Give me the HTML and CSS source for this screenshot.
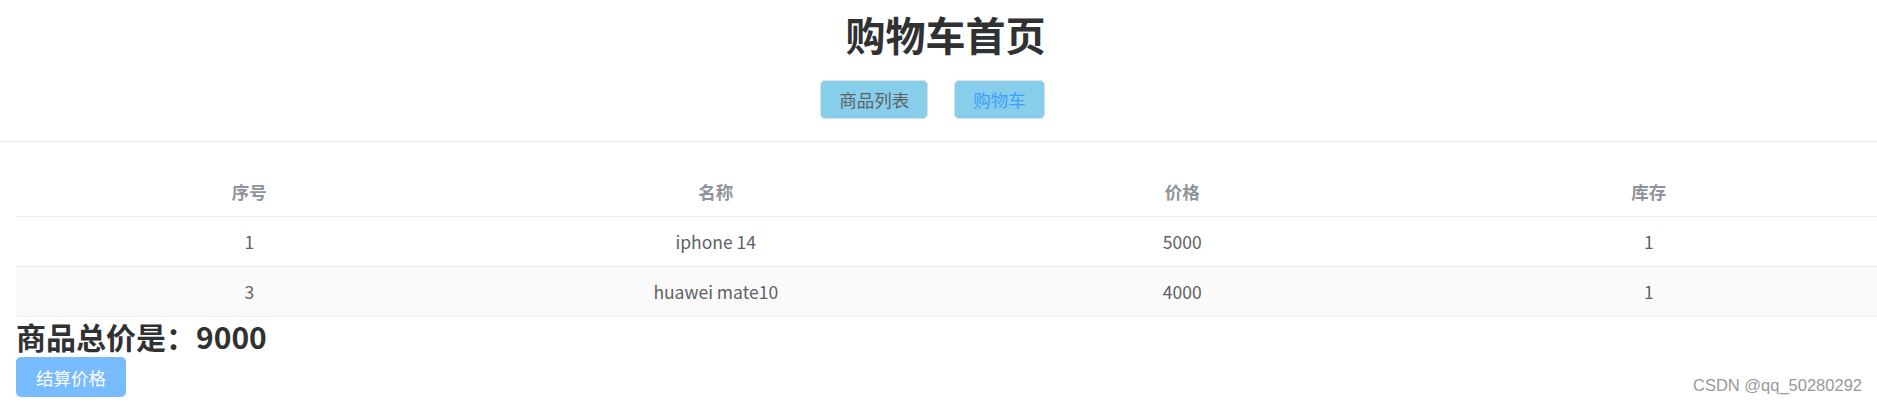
FILE: index.html
```html
<!DOCTYPE html>
<html lang="zh-CN">
<head>
<meta charset="utf-8">
<title>购物车首页</title>
<link rel="stylesheet" href="styles.css">
</head>
<body>
<header class="top">
  <h1 class="title">购物车首页</h1>
  <nav class="nav">
    <button class="nav-btn">商品列表</button>
    <button class="nav-btn active">购物车</button>
  </nav>
</header>
<main class="content">
  <table class="cart">
    <thead>
      <tr><th>序号</th><th>名称</th><th>价格</th><th>库存</th></tr>
    </thead>
    <tbody>
      <tr><td>1</td><td>iphone 14</td><td>5000</td><td>1</td></tr>
      <tr class="striped"><td>3</td><td>huawei mate10</td><td>4000</td><td>1</td></tr>
    </tbody>
  </table>
  <h2 class="total">商品总价是：9000</h2>
  <button class="pay">结算价格</button>
</main>
<div class="watermark">CSDN @qq_50280292</div>
</body>
</html>
```
FILE: styles.css
```css
html, body {
  margin: 0;
  padding: 0;
  overflow: hidden;
  background: #fff;
  font-family: "Noto Sans CJK SC", "Microsoft YaHei", sans-serif;
  color: #606266;
}
.top {
  border-bottom: 1px solid #e4e7ed;
  height: 142px;
  box-sizing: border-box;
  padding-top: 9px;
}
.title {
  margin: 0;
  padding-left: 14px;
  text-align: center;
  font-size: 40px;
  line-height: 50px;
  font-weight: 700;
  color: #303133;
}
.nav {
  display: flex;
  justify-content: center;
  gap: 26px;
  padding-right: 12px;
  margin-top: 21px;
}
.nav-btn {
  height: 39px;
  padding: 0 18px;
  border: 1px solid #dcdfe6;
  border-radius: 5px;
  background: #87ceeb;
  color: #606266;
  font-family: inherit;
  font-size: 17.5px;
  line-height: 37px;
}
.nav-btn.active {
  color: #409eff;
}
.content {
  padding: 25px 0 0 16px;
}
.cart {
  border-collapse: collapse;
  width: calc(100% + 5px);
  table-layout: fixed;
  font-size: 17.5px;
}
.cart th, .cart td {
  text-align: center;
  height: 49px;
  padding: 0;
  border-bottom: 1px solid #ebeef5;
}
.cart th {
  color: #909399;
  font-weight: 700;
}
.cart td {
  color: #606266;
}
.cart tr.striped td {
  background: #fafafa;
}
.total {
  margin: 0;
  font-size: 30px;
  line-height: 38px;
  font-weight: 700;
  color: #303133;
}
.pay {
  display: block;
  margin-top: 2px;
  width: 110px;
  height: 40px;
  border: none;
  border-radius: 5px;
  background: #79bbff;
  color: #fff;
  font-family: inherit;
  font-size: 17.5px;
}
.watermark {
  position: absolute;
  right: 15px;
  top: 376px;
  font-family: "Liberation Sans", Arial, sans-serif;
  font-size: 16.5px;
  color: #999;
}
```
